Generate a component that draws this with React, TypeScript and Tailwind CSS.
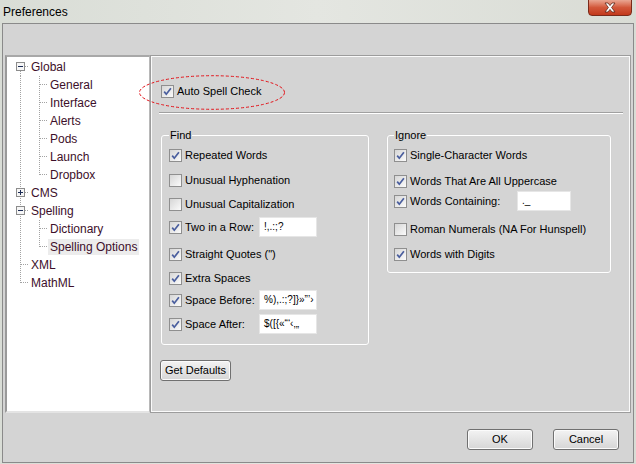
import React from "react";

const font = { fontFamily: '"Liberation Sans", Arial, sans-serif' };

const CheckBox = ({ on }: { on?: boolean }) => (
  <span className="w-[13px] h-[13px] shrink-0 border border-[#8f8f8f] bg-gradient-to-br from-[#d6d6d6] to-[#fbfbfb] flex items-center justify-center">
    {on && (
      <svg width="11" height="11" viewBox="0 0 11 11">
        <path d="M2.2 5.6 L4.3 8.2 L8.9 2.3" fill="none" stroke="#4a5e9e" strokeWidth="1.7" />
      </svg>
    )}
  </span>
);

const Field = ({ value, w }: { value: string; w: string }) => (
  <div className={`${w} h-[20px] bg-white border border-[#e6e6e6] text-[10px] leading-[18px] pl-[4px] overflow-hidden whitespace-nowrap text-black`}>
    {value}
  </div>
);

const Button = ({ label, w }: { label: string; w: string }) => (
  <button className={`${w} h-[21px] rounded-[3px] border border-[#707070] bg-gradient-to-b from-[#f3f3f3] to-[#d6d6d6] shadow-[inset_0_0_0_1px_#fbfbfb] text-[11px] text-black leading-none`}>
    {label}
  </button>
);

type Row = { label: string; on?: boolean; field?: string; mt: string };

const findRows: Row[] = [
  { label: "Repeated Words", on: true, mt: "mt-[3px]" },
  { label: "Unusual Hyphenation", mt: "mt-[5px]" },
  { label: "Unusual Capitalization", mt: "mt-[4px]" },
  { label: "Two in a Row:", on: true, field: "!,.:;?", mt: "mt-[3px]" },
  { label: "Straight Quotes (\")", on: true, mt: "mt-[7px]" },
  { label: "Extra Spaces", on: true, mt: "mt-[4px]" },
  { label: "Space Before:", on: true, field: "%),.:;?]}»”’›", mt: "mt-[2px]" },
  { label: "Space After:", on: true, field: "$([{«“‘‹‚„", mt: "mt-[4px]" },
];

const ignoreRows: Row[] = [
  { label: "Single-Character Words", on: true, mt: "mt-[3px]" },
  { label: "Words That Are All Uppercase", on: true, mt: "mt-[6px]" },
  { label: "Words Containing:", on: true, field: "._", mt: "mt-0" },
  { label: "Roman Numerals (NA For Hunspell)", mt: "mt-[8px]" },
  { label: "Words with Digits", on: true, mt: "mt-[5px]" },
];

const Group = ({ title, rows, w, pl, pb, labelW, fieldW }: {
  title: string; rows: Row[]; w: string; pl: string; pb: string; labelW: string; fieldW: string;
}) => (
  <fieldset className={`${w} ${pl} ${pb} border border-white rounded-[3px] shadow-[0_0_0_0.5px_#cfcfcf]`}>
    <legend className="px-[1px] text-[11px] leading-[14px] text-black">{title}</legend>
    {rows.map((r) => (
      <div key={r.label} className={`${r.mt} h-[20px] flex items-center`}>
        <CheckBox on={r.on} />
        <span className={`ml-[3px] text-[11px] text-black whitespace-nowrap ${r.field ? labelW : ""}`}>{r.label}</span>
        {r.field && <Field value={r.field} w={fieldW} />}
      </div>
    ))}
  </fieldset>
);

type Node = { t: string; lvl: 0 | 1; box?: "+" | "-"; first?: boolean; last?: boolean; sel?: boolean };

const tree: Node[] = [
  { t: "Global", lvl: 0, box: "-", first: true },
  { t: "General", lvl: 1 },
  { t: "Interface", lvl: 1 },
  { t: "Alerts", lvl: 1 },
  { t: "Pods", lvl: 1 },
  { t: "Launch", lvl: 1 },
  { t: "Dropbox", lvl: 1, last: true },
  { t: "CMS", lvl: 0, box: "+" },
  { t: "Spelling", lvl: 0, box: "-" },
  { t: "Dictionary", lvl: 1 },
  { t: "Spelling Options", lvl: 1, last: true, sel: true },
  { t: "XML", lvl: 0 },
  { t: "MathML", lvl: 0, last: true },
];

const dot = { stroke: "#a3a3a3", strokeDasharray: "1 1", strokeWidth: 1 };

const Gutter = ({ n }: { n: Node }) => {
  const w = n.lvl === 0 ? 22 : 41;
  return (
    <svg width={w} height="18" viewBox={`0 0 ${w} 18`} className="shrink-0">
      {n.lvl === 0 ? (
        <>
          <line x1="13.5" x2="13.5" y1={n.first ? 9 : 0} y2={n.last ? 9 : 18} {...dot} />
          <line x1="14" x2="22" y1="8.5" y2="8.5" {...dot} />
          {n.box && (
            <>
              <rect x="9.5" y="4.5" width="8" height="8" fill="#f6f6f6" stroke="#8c8c8c" />
              <line x1="11" x2="16" y1="8.5" y2="8.5" stroke="#1b2b55" />
              {n.box === "+" && <line x1="13.5" x2="13.5" y1="6" y2="11" stroke="#1b2b55" />}
            </>
          )}
        </>
      ) : (
        <>
          <line x1="13.5" x2="13.5" y1="0" y2="18" {...dot} />
          <line x1="32.5" x2="32.5" y1="0" y2={n.last ? 9 : 18} {...dot} />
          <line x1="33" x2="41" y1="8.5" y2="8.5" {...dot} />
        </>
      )}
    </svg>
  );
};

export default function App() {
  return (
    <div className="w-[636px] h-[464px] bg-gradient-to-r from-[#d9ddd6] via-[#e4e6e1] to-[#d9dcd5] flex flex-col overflow-hidden" style={font}>
      {/* title bar */}
      <div className="relative h-[23px] flex items-center pl-[3px] text-[12px] text-black">
        Preferences
        <div className="absolute top-[-1px] right-[4px] w-[44px] h-[17px] rounded-b-[4px] border border-[#7a2a1a] bg-gradient-to-b from-[#e9a692] via-[#d2573a] to-[#c2381b] flex items-center justify-center">
          <svg width="14" height="11" viewBox="0 0 14 11">
            <path d="M2 1 L5 1 L7 3.6 L9 1 L12 1 L8.6 5.5 L12 10 L9 10 L7 7.4 L5 10 L2 10 L5.4 5.5 Z" fill="#fff" stroke="#5a2418" strokeWidth="0.8" />
          </svg>
        </div>
      </div>

      {/* window body */}
      <div className="mx-[2px] h-[440px] border border-[#8a8a8a] bg-[#d4d4d4] flex flex-col">
        <div className="mt-[31px] h-[358px] pl-[2px] flex">
          {/* tree */}
          <div className="w-[145px] h-full bg-white border-l-2 border-t-2 border-r border-b-2 border-l-[#9a9a9a] border-t-[#a8a8a8] border-r-[#b8b8b8] border-b-[#e4e4e4] pt-[1px]">
            {tree.map((n) => (
              <div key={n.t} className="h-[18px] flex items-center">
                <Gutter n={n} />
                <span className={`px-[2px] h-[16px] leading-[16px] text-[12px] text-[#3d0f2a] whitespace-nowrap ${n.sel ? "bg-[#ececec]" : ""}`}>
                  {n.t}
                </span>
              </div>
            ))}
          </div>

          {/* options panel */}
          <div className="relative w-[481px] h-full border border-[#9c9c9c] shadow-[inset_1px_1px_0_#fafafa,inset_-1px_-1px_0_#fafafa] pl-[10px]">
            <div className="mt-[25px] h-[20px] flex items-center">
              <CheckBox on />
              <span className="ml-[3px] text-[11px] text-black">Auto Spell Check</span>
            </div>
            <div className="mt-[11px] -ml-[2px] w-[464px] h-[2px] border-t border-[#a0a0a0] bg-white" />

            <div className="mt-[14px] flex items-start gap-[18px]">
              <Group title="Find" rows={findRows} w="w-[208px]" pl="pl-[7px]" pb="pb-[10px]" labelW="w-[74px]" fieldW="w-[58px]" />
              <Group title="Ignore" rows={ignoreRows} w="w-[224px]" pl="pl-[6px]" pb="pb-[8px]" labelW="w-[107px]" fieldW="w-[54px]" />
            </div>

            <div className="mt-[12px] -ml-[1px]">
              <Button label="Get Defaults" w="w-[71px]" />
            </div>

            <svg className="absolute left-[-12px] top-[19px]" width="146" height="35" viewBox="0 0 146 35">
              <ellipse cx="73" cy="17.5" rx="72.5" ry="16.8" fill="none" stroke="#e3141b" strokeWidth="1" strokeDasharray="3 2" />
            </svg>
          </div>
        </div>

        <div className="mt-[16px] pr-[14px] flex justify-end gap-[20px]">
          <Button label="OK" w="w-[66px]" />
          <Button label="Cancel" w="w-[66px]" />
        </div>
      </div>
    </div>
  );
}
